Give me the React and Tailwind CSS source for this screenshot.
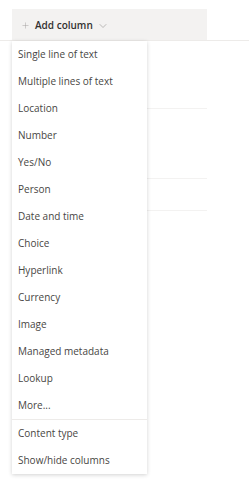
import { Plus, ChevronDown } from 'lucide-react';

const types = [
    'Single line of text',
    'Multiple lines of text',
    'Location',
    'Number',
    'Yes/No',
    'Person',
    'Date and time',
    'Choice',
    'Hyperlink',
    'Currency',
    'Image',
    'Managed metadata',
    'Lookup',
    'More...',
];

const extras = ['Content type', 'Show/hide columns'];

export default function App() {
    return (
        <div className="relative w-[249px] h-[480px] bg-white overflow-hidden" style={{ fontFamily: '"Open Sans", "Noto Sans", sans-serif' }}>
            <div className="pt-[9px]">
                <div className="ml-[12px] w-[195px] h-[31px] bg-[#f3f2f1] flex items-center pl-[9px] pt-[2px]">
                    <Plus size={9} strokeWidth={1.3} className="text-[#a19f9d]" />
                    <span className="ml-[5px] text-[10px] font-semibold text-[#323130]">Add column</span>
                    <ChevronDown size={12} strokeWidth={1.1} className="ml-[4px] text-[#8a8886]" />
                </div>
                <div className="h-px bg-[#edebe9]" />
                <div className="ml-[147px] w-[60px]">
                    <div className="h-[68px] border-b border-[#f3f2f1]" />
                    <div className="h-[70px] border-b border-[#f3f2f1]" />
                    <div className="h-[32px] border-b border-[#f3f2f1]" />
                </div>
            </div>

            {/* dropdown menu */}
            <div className="absolute left-[12px] top-[41px] w-[135px] bg-white shadow-[0_1px_4px_rgba(0,0,0,0.18)]">
                {types.map((t) => (
                    <div key={t} className="h-[27px] flex items-center pl-[6px] text-[10px] text-[#484644]">
                        {t}
                    </div>
                ))}
                <div className="h-px bg-[#edebe9]" />
                {extras.map((t) => (
                    <div key={t} className="h-[27px] flex items-center pl-[6px] text-[10px] text-[#484644]">
                        {t}
                    </div>
                ))}
            </div>
        </div>
    );
}
